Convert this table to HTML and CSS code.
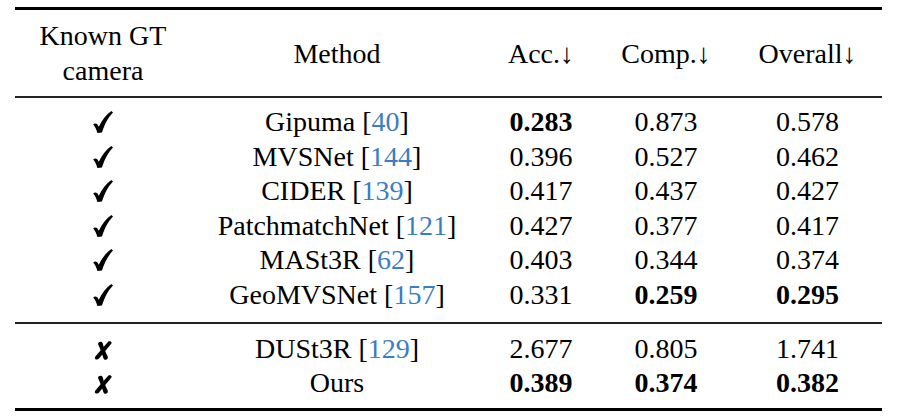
FILE: index.html
```html
<!DOCTYPE html>
<html>
<head>
<meta charset="utf-8">
<link rel="stylesheet" href="styles.css">
</head>
<body>
<div class="wrap">
<table class="results">
  <colgroup>
    <col class="c1"><col class="c2"><col class="c3"><col class="c4"><col class="c5">
  </colgroup>
  <thead>
    <tr>
      <th>Known GT<br>camera</th>
      <th>Method</th>
      <th>Acc.↓</th>
      <th>Comp.↓</th>
      <th>Overall↓</th>
    </tr>
  </thead>
  <tbody class="g1">
    <tr class="first">
      <td><svg class="chk" viewBox="0 0 20 22"><path d="M0.2,13.6 C2,11.6 4.2,12.4 5.2,14.8 L5.8,15.8 C9,9.2 13,3.6 18.4,0 L20,1.6 C15.2,6.8 11.6,13 9,21.6 L4.4,22 C3.4,18.6 2.2,15.6 0.2,13.6 Z"/></svg></td>
      <td>Gipuma <span class="ref">[<a>40</a>]</span></td>
      <td><b>0.283</b></td><td>0.873</td><td>0.578</td>
    </tr>
    <tr>
      <td><svg class="chk" viewBox="0 0 20 22"><path d="M0.2,13.6 C2,11.6 4.2,12.4 5.2,14.8 L5.8,15.8 C9,9.2 13,3.6 18.4,0 L20,1.6 C15.2,6.8 11.6,13 9,21.6 L4.4,22 C3.4,18.6 2.2,15.6 0.2,13.6 Z"/></svg></td>
      <td>MVSNet <span class="ref">[<a>144</a>]</span></td>
      <td>0.396</td><td>0.527</td><td>0.462</td>
    </tr>
    <tr>
      <td><svg class="chk" viewBox="0 0 20 22"><path d="M0.2,13.6 C2,11.6 4.2,12.4 5.2,14.8 L5.8,15.8 C9,9.2 13,3.6 18.4,0 L20,1.6 C15.2,6.8 11.6,13 9,21.6 L4.4,22 C3.4,18.6 2.2,15.6 0.2,13.6 Z"/></svg></td>
      <td>CIDER <span class="ref">[<a>139</a>]</span></td>
      <td>0.417</td><td>0.437</td><td>0.427</td>
    </tr>
    <tr>
      <td><svg class="chk" viewBox="0 0 20 22"><path d="M0.2,13.6 C2,11.6 4.2,12.4 5.2,14.8 L5.8,15.8 C9,9.2 13,3.6 18.4,0 L20,1.6 C15.2,6.8 11.6,13 9,21.6 L4.4,22 C3.4,18.6 2.2,15.6 0.2,13.6 Z"/></svg></td>
      <td>PatchmatchNet <span class="ref">[<a>121</a>]</span></td>
      <td>0.427</td><td>0.377</td><td>0.417</td>
    </tr>
    <tr>
      <td><svg class="chk" viewBox="0 0 20 22"><path d="M0.2,13.6 C2,11.6 4.2,12.4 5.2,14.8 L5.8,15.8 C9,9.2 13,3.6 18.4,0 L20,1.6 C15.2,6.8 11.6,13 9,21.6 L4.4,22 C3.4,18.6 2.2,15.6 0.2,13.6 Z"/></svg></td>
      <td>MASt3R <span class="ref">[<a>62</a>]</span></td>
      <td>0.403</td><td>0.344</td><td>0.374</td>
    </tr>
    <tr class="last">
      <td><svg class="chk" viewBox="0 0 20 22"><path d="M0.2,13.6 C2,11.6 4.2,12.4 5.2,14.8 L5.8,15.8 C9,9.2 13,3.6 18.4,0 L20,1.6 C15.2,6.8 11.6,13 9,21.6 L4.4,22 C3.4,18.6 2.2,15.6 0.2,13.6 Z"/></svg></td>
      <td>GeoMVSNet <span class="ref">[<a>157</a>]</span></td>
      <td>0.331</td><td><b>0.259</b></td><td><b>0.295</b></td>
    </tr>
  </tbody>
  <tbody class="g2">
    <tr class="first">
      <td><svg class="crs" viewBox="0 0 20 19"><path d="M15.4,0.4 C17,-0.2 19,0.6 18.6,2.2 C15.2,6.6 10.4,11.8 6,17.6 C4.8,19 2.4,18.8 1.9,17.4 C1.6,16.2 2.4,15.2 3.4,14.2 C7.4,9.6 11.4,4.8 15.4,0.4 Z"/><path d="M5.6,1.4 C7.4,0.2 9.4,0.8 9.8,2.6 C10.8,6.8 12.4,11.4 14.8,15.8 C15.2,17.4 14.2,18.8 12.6,18.8 C11.2,18.8 10.6,17.6 10.2,16.4 C8.8,12.2 7,7.2 5.2,3.4 C4.9,2.6 5,1.9 5.6,1.4 Z"/></svg></td>
      <td>DUSt3R <span class="ref">[<a>129</a>]</span></td>
      <td>2.677</td><td>0.805</td><td>1.741</td>
    </tr>
    <tr class="last">
      <td><svg class="crs" viewBox="0 0 20 19"><path d="M15.4,0.4 C17,-0.2 19,0.6 18.6,2.2 C15.2,6.6 10.4,11.8 6,17.6 C4.8,19 2.4,18.8 1.9,17.4 C1.6,16.2 2.4,15.2 3.4,14.2 C7.4,9.6 11.4,4.8 15.4,0.4 Z"/><path d="M5.6,1.4 C7.4,0.2 9.4,0.8 9.8,2.6 C10.8,6.8 12.4,11.4 14.8,15.8 C15.2,17.4 14.2,18.8 12.6,18.8 C11.2,18.8 10.6,17.6 10.2,16.4 C8.8,12.2 7,7.2 5.2,3.4 C4.9,2.6 5,1.9 5.6,1.4 Z"/></svg></td>
      <td>Ours</td>
      <td><b>0.389</b></td><td><b>0.374</b></td><td><b>0.382</b></td>
    </tr>
  </tbody>
</table>
</div>
</body>
</html>
```
FILE: styles.css
```css
html, body {
  margin: 0;
  padding: 0;
  background: #fff;
}
.wrap {
  padding: 7px 0 0 15px;
}
.results {
  width: 867px;
  border-collapse: collapse;
  table-layout: fixed;
  font-family: "Liberation Serif", "Times New Roman", serif;
  font-size: 28px;
  color: #000;
  border-top: 3px solid #000;
  border-bottom: 3px solid #000;
}
.c1 { width: 176px; }
.c2 { width: 292px; }
.c3 { width: 116px; }
.c4 { width: 134px; }
.c5 { width: 149px; }

.results th, .results td {
  padding: 0;
  text-align: center;
  white-space: nowrap;
}
.results th {
  font-weight: normal;
  line-height: 35px;
  padding-top: 8px;
  padding-bottom: 8px;
  border-bottom: 2px solid #222;
  vertical-align: middle;
}
.results td {
  line-height: 34.5px;
  height: 34.5px;
}
.g1 .first td { padding-top: 7px; }
.g1 .last td { padding-bottom: 10px; }
.g1 { border-bottom: 2px solid #222; }
.g2 td { line-height: 34px; height: 34px; }
.g2 .first td { padding-top: 8px; }
.g2 .last td { padding-bottom: 8px; }

.ref a {
  color: #3a7dc2;
}
.chk {
  width: 20px;
  height: 22px;
  vertical-align: -2px;
  fill: #000;
}
.crs {
  width: 20px;
  height: 19px;
  vertical-align: -2px;
  fill: #000;
}
b { font-weight: bold; }
```
